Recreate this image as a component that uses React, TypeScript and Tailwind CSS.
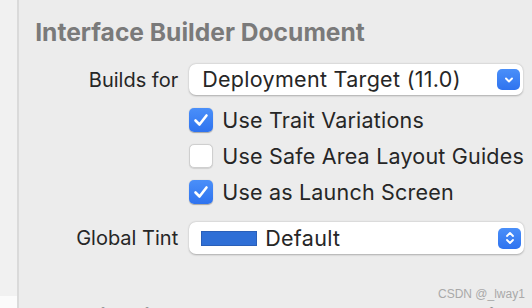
import React from "react";

const Check = () => (
  <svg width="16" height="14" viewBox="0 0 16 14" fill="none">
    <path d="M2.5 7.5 L6.5 11.5 L13.5 2.5" stroke="white" strokeWidth="2.6" strokeLinecap="round" strokeLinejoin="round" />
  </svg>
);

const Checkbox = ({ checked, label }: { checked: boolean; label: string }) => (
  <div className="flex h-[36px] items-center">
    {checked ? (
      <div className="flex size-[24px] shrink-0 items-center justify-center rounded-[5px] bg-gradient-to-b from-[#4a8ff9] to-[#2f73ef] shadow-[0_0.5px_1px_rgba(0,0,0,0.3)]">
        <Check />
      </div>
    ) : (
      <div className="size-[24px] shrink-0 rounded-[5px] border border-[#cfcfcf] bg-white shadow-[0_0.5px_1px_rgba(0,0,0,0.12)]" />
    )}
    <span className="ml-[9px] whitespace-nowrap text-[21.5px] tracking-[0.2px] text-[#262626]">{label}</span>
  </div>
);

const BlueButton = ({ double }: { double?: boolean }) => (
  <div className="mr-[3px] flex h-[21px] w-[23px] shrink-0 items-center justify-center rounded-[5px] bg-gradient-to-b from-[#4a8ff9] to-[#2f73ef]">
    {double ? (
      <svg width="12" height="16" viewBox="0 0 12 16" fill="none">
        <path d="M3 6 L6 3 L9 6" stroke="white" strokeWidth="1.8" strokeLinecap="round" strokeLinejoin="round" />
        <path d="M3 10 L6 13 L9 10" stroke="white" strokeWidth="1.8" strokeLinecap="round" strokeLinejoin="round" />
      </svg>
    ) : (
      <svg width="12" height="10" viewBox="0 0 12 10" fill="none">
        <path d="M3 3.5 L6 6.5 L9 3.5" stroke="white" strokeWidth="1.9" strokeLinecap="round" strokeLinejoin="round" />
      </svg>
    )}
  </div>
);

const Popup = ({ h, children, double }: { h: string; children: React.ReactNode; double?: boolean }) => (
  <div className={`flex ${h} flex-1 items-center rounded-[7px] bg-white shadow-[0_0.5px_2px_rgba(0,0,0,0.28)]`}>
    <div className="flex flex-1 items-center whitespace-nowrap">{children}</div>
    <BlueButton double={double} />
  </div>
);

export default function App() {
  return (
    <div
      className="relative flex h-[308px] w-[532px] overflow-hidden bg-[#ececec]"
      style={{ fontFamily: "Inter, 'Liberation Sans', sans-serif" }}
    >
      <div className="flex w-[18px] flex-col bg-[#f1f1f1]">
        <div className="mt-auto h-[12px] bg-[#fbfbfb]" />
      </div>
      <div className="w-[2px] bg-[#dadada]" />

      <div className="flex flex-1 flex-col pl-[16px] pr-[8px]">
        <div className="mt-[2px] h-[2px] bg-[#d6d6d6]" />
        <div className="mt-[15px] h-[30px] whitespace-nowrap text-[24.6px] font-bold leading-[30px] text-[#7a7a7a]">
          Interface Builder Document
        </div>

        <div className="mt-[17px] flex h-[31px] items-center">
          <div className="w-[143px] text-right text-[20px] text-[#262626]">Builds for</div>
          <div className="ml-[11px] flex flex-1 pr-[1px]">
            <Popup h="h-[31px]">
              <span className="pl-[13px] text-[21.5px] tracking-[0.3px] text-[#262626]">Deployment Target (11.0)</span>
            </Popup>
          </div>
        </div>

        <div className="mt-[7px] flex flex-col pl-[154px]">
          <Checkbox checked label="Use Trait Variations" />
          <Checkbox checked={false} label="Use Safe Area Layout Guides" />
          <Checkbox checked label="Use as Launch Screen" />
        </div>

        <div className="mt-[3px] h-[2px] bg-[#d6d6d6]" />

        <div className="mt-[9px] flex h-[32px] items-center">
          <div className="w-[143px] text-right text-[20px] text-[#262626]">Global Tint</div>
          <div className="ml-[11px] flex flex-1">
            <Popup h="h-[32px]" double>
              <div className="ml-[12px] h-[15px] w-[56px] shrink-0 border border-[#2a5fb8] bg-[#2f6fd6]" />
              <span className="ml-[8px] text-[21.5px] tracking-[0.3px] text-[#262626]">Default</span>
            </Popup>
          </div>
        </div>

        <div className="mt-[28px] h-[2px] bg-[#d6d6d6]" />

        <div className="mt-[21px] flex h-[30px] shrink-0 whitespace-nowrap text-[24.6px] font-bold leading-[30px] text-[#7a7a7a]">
          <span>Localization</span>
          <span className="ml-auto w-[54px]">Hide</span>
        </div>
      </div>

      <div className="absolute left-[438px] top-[285px] text-[12px] text-[#a9a9a9]" style={{ fontFamily: "'Liberation Sans', sans-serif" }}>
        CSDN @_lway1
      </div>
    </div>
  );
}
